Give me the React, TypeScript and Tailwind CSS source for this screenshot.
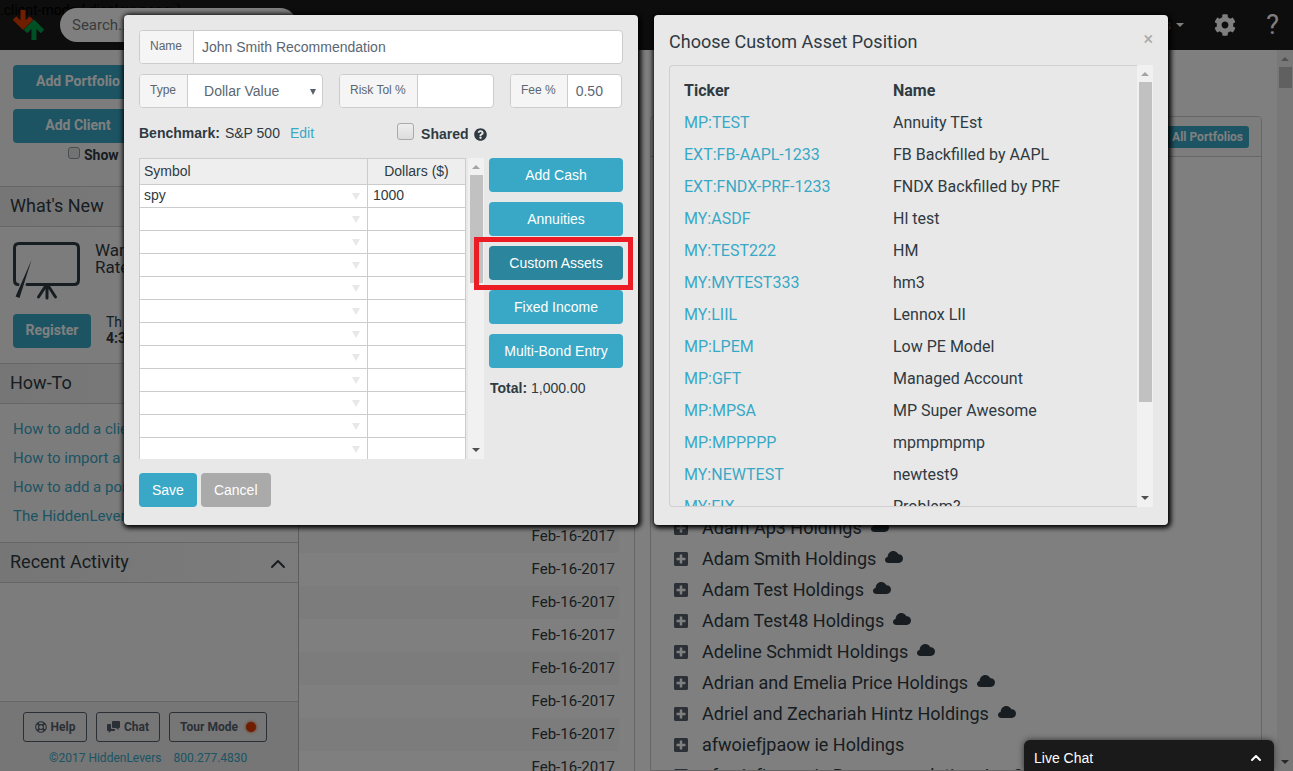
import { useState } from "react";
import { ChevronUp } from "lucide-react";
import { FaCog, FaPlusSquare, FaQuestionCircle, FaRegLifeRing } from "react-icons/fa";

const howToLinks = [
  "How to add a client",
  "How to import a",
  "How to add a portfolio",
  "The HiddenLevers",
];

const dates = Array.from({ length: 8 }, () => "Feb-16-2017");

const holdings = [
  { name: "Adam Ap3 Holdings", cloud: true },
  { name: "Adam Smith Holdings", cloud: true },
  { name: "Adam Test Holdings", cloud: true },
  { name: "Adam Test48 Holdings", cloud: true },
  { name: "Adeline Schmidt Holdings", cloud: true },
  { name: "Adrian and Emelia Price Holdings", cloud: true },
  { name: "Adriel and Zechariah Hintz Holdings", cloud: true },
  { name: "afwoiefjpaow ie Holdings", cloud: false },
  { name: "afwoiefjpaow ie Recommendation Jan 2", cloud: false },
];

const positions = [
  ["MP:TEST", "Annuity TEst"],
  ["EXT:FB-AAPL-1233", "FB Backfilled by AAPL"],
  ["EXT:FNDX-PRF-1233", "FNDX Backfilled by PRF"],
  ["MY:ASDF", "Hl test"],
  ["MY:TEST222", "HM"],
  ["MY:MYTEST333", "hm3"],
  ["MY:LIIL", "Lennox LII"],
  ["MP:LPEM", "Low PE Model"],
  ["MP:GFT", "Managed Account"],
  ["MP:MPSA", "MP Super Awesome"],
  ["MP:MPPPPP", "mpmpmpmp"],
  ["MY:NEWTEST", "newtest9"],
  ["MY:FIX", "Problem?"],
];

const assetRows = [
  ["spy", "1000"],
  ...Array.from({ length: 11 }, () => ["", ""]),
];

function Scrollbar({ thumb, upArrow = "border-b-[#a3a3a3]" }: { thumb: string; upArrow?: string }) {
  return (
    <div className="flex w-4 shrink-0 flex-col items-center bg-[#f1f1f1]" aria-hidden="true">
      <div className="flex h-[17px] items-center">
        <i className={`border-x-4 border-b-4 border-x-transparent ${upArrow}`} />
      </div>
      <div className={`w-[13px] bg-[#c1c1c1] ${thumb}`} />
      <div className="mt-auto flex h-[19px] items-center">
        <i className="border-x-4 border-t-4 border-x-transparent border-t-[#505050]" />
      </div>
    </div>
  );
}

function Logo() {
  return (
    <svg width="34" height="32" viewBox="0 0 34 32" className="relative" aria-label="HiddenLevers" role="img">
      <path d="M11 1v16M2.500 9l8.500 8.500L19.500 9" fill="none" stroke="#e03c00" strokeWidth="5" />
      <path d="M22 31V15M13.500 22.500L22 14l8.500 8.500" fill="none" stroke="#00a04a" strokeWidth="5" />
    </svg>
  );
}

function Whiteboard() {
  return (
    <svg width="68" height="58" viewBox="0 0 68 58" className="shrink-0" aria-hidden="true">
      <g fill="none" stroke="#2f3d45" strokeLinecap="round">
        <path d="M5 42.500Q1.500 42.500 1.500 38V6Q1.500 1.500 6 1.500H61Q65.500 1.500 65.500 6V38Q65.500 42.500 61 42.500H14" strokeWidth="3" />
        <path d="M32 45l-6.500 10M36 45l6.500 10M34 44v12" strokeWidth="3" />
      </g>
      <path d="M18.500 18L6.500 56l-4-1.500z" fill="#2f3d45" stroke="#f9f9f9" strokeWidth="1" paintOrder="stroke" />
    </svg>
  );
}

function CloudIcon() {
  return (
    <svg width="18" height="12" viewBox="0 0 18 12" fill="currentColor" className="mb-[3px] ml-[9px]" aria-hidden="true">
      <path d="M3.500 12C1.500 12 0 10.700 0 8.900 0 7.300 1.100 6.200 2.600 6 2.700 2.600 5.200 0 8.300 0c2.300 0 4.200 1.300 5.100 3.300 2.600-.2 4.600 1.700 4.600 4.300 0 2.500-1.900 4.400-4.300 4.400z" />
    </svg>
  );
}

function ChatIcon() {
  return (
    <svg width="13" height="12" viewBox="0 0 13 12" fill="currentColor" aria-hidden="true">
      <path d="M6 0h6q1 0 1 1v5q0 1-1 1h-.5v2L9 7H6Q5 7 5 6V1q0-1 1-1z" />
      <path d="M1 3h3v4q0 1 1 1h3v1q0 1-1 1H4l-2.200 2V10H1q-1 0-1-1V4q0-1 1-1z" />
    </svg>
  );
}

function Topbar() {
  return (
    <header className="relative flex h-[50px] shrink-0 items-center bg-[#1a1a1a] pl-3 text-white">
      <span className="absolute top-0 left-0 text-sm text-black">.client-mode {"{ display: none; }"}</span>
      <Logo />
      <input
        aria-label="Search"
        placeholder="Search..."
        className="relative ml-[14px] h-[34px] w-[237px] rounded-full bg-white px-3 text-[15px] placeholder:text-[#777]"
      />
      <nav className="ml-auto flex items-center pr-[14px]">
        <button className="flex items-center gap-[5px] text-[15px] text-[#ccc]">
          s <i className="border-x-4 border-t-4 border-x-transparent border-t-white" />
        </button>
        <button aria-label="Settings" className="ml-[30px]">
          <FaCog size={22} />
        </button>
        <button className="ml-[30px] text-[27px] leading-none">?</button>
      </nav>
    </header>
  );
}

function SectionTitle({ children, open }: { children: string; open?: boolean }) {
  return (
    <h2 className="flex h-[41px] shrink-0 items-center justify-between border-y border-[#ccc] bg-gradient-to-r from-[#ececec] to-[#f8f8f8] pr-2 pb-[2px] pl-[10px] text-[18px]">
      {children}
      {open && <ChevronUp size={24} strokeWidth={2} className="mt-1" />}
    </h2>
  );
}

const sideButton = "h-[34px] shrink-0 rounded-[4px] bg-[#38a8c6] pb-[2px] text-sm font-bold text-white";
const footerButton = "flex h-[30px] items-center justify-center rounded-[3px] border border-[#56616d]";

function Sidebar() {
  return (
    <aside className="flex w-[299px] shrink-0 flex-col border-r border-[#bbb] bg-[#f9f9f9]">
      <div className="flex h-[136px] shrink-0 flex-col gap-[10px] pt-[15px] pl-[13px]">
        <button className={`${sideButton} w-[130px]`}>Add Portfolio</button>
        <button className={`${sideButton} w-[130px]`}>Add Client</button>
        <label className="-mt-2 flex items-center gap-1 pl-[55px] text-sm font-bold">
          <input type="checkbox" className="mb-1 size-3 appearance-none rounded-[3px] border border-[#999] bg-gray-200" />
          Show
        </label>
      </div>
      <SectionTitle>What's New</SectionTitle>
      <div className="flex h-[136px] shrink-0 flex-col gap-[14px] pt-[15px] pl-[13px]">
        <div className="flex gap-[14px]">
          <Whiteboard />
          <p className="text-[17px] leading-[17px]">
            Want
            <br />
            Rate
          </p>
        </div>
        <div className="flex gap-[15px]">
          <button className={`${sideButton} w-[78px]`}>Register</button>
          <p className="text-sm leading-4">
            Th
            <br />
            <b>4:3</b>
          </p>
        </div>
      </div>
      <SectionTitle>How-To</SectionTitle>
      <ul className="h-[138px] shrink-0 pt-[11px] pl-[13px] text-[15px] leading-[29px]">
        {howToLinks.map((link) => (
          <li key={link}>
            <a href="#" className="text-[#38a8c6]">
              {link}
            </a>
          </li>
        ))}
      </ul>
      <SectionTitle open>Recent Activity</SectionTitle>
      <div className="flex-1" />
      <footer className="h-[70px] shrink-0 border-t border-[#ccc] bg-[#ececec] pt-[10px] text-xs text-[#56616d]">
        <div className="flex gap-[9px] pl-[23px] font-bold">
          <button className={`${footerButton} w-16 gap-1`}>
            <FaRegLifeRing size={12} /> Help
          </button>
          <button className={`${footerButton} w-16 gap-1`}>
            <ChatIcon /> Chat
          </button>
          <button className={`${footerButton} w-[98px] gap-2`}>
            Tour Mode <span className="size-[10px] rounded-full bg-[#e03c00] shadow-[0_0_3px_#e03c00]" />
          </button>
        </div>
        <div className="flex gap-3 pt-2 pl-[49px] text-[#38a8c6]">
          <a href="#">©2017 HiddenLevers</a>
          <a href="tel:8002774830">800.277.4830</a>
        </div>
      </footer>
    </aside>
  );
}

function ActivityPanel() {
  return (
    <section className="overflow-hidden border-r border-[#ccc] pt-[470px] pr-[15px]">
      <table className="w-full text-[15px]">
        <tbody>
          {dates.map((date, i) => (
            <tr key={i} className="h-[33px] odd:bg-[#f9f9f9]">
              <td className="pr-1 text-right">{date}</td>
            </tr>
          ))}
        </tbody>
      </table>
    </section>
  );
}

function HoldingsPanel() {
  return (
    <section className="mt-[66px] overflow-hidden rounded-t-[4px] border border-[#ccc]">
      <div className="flex h-[40px] items-center justify-end border-b border-[#ccc] bg-[#fafafa] pr-3">
        <button className="h-[22px] rounded-[3px] bg-[#38a8c6] px-[6px] text-xs font-bold text-white">All Portfolios</button>
      </div>
      <ul className="pt-[355px] pl-[22px] text-[18px]">
        {holdings.map((h) => (
          <li key={h.name} className="flex h-[31px] items-center">
            <FaPlusSquare size={16} className="text-[#56616d]" />
            <span className="ml-[13px]">{h.name}</span>
            {h.cloud && <CloudIcon />}
          </li>
        ))}
      </ul>
    </section>
  );
}

const addon = "flex h-full shrink-0 items-center border-r border-[#ccc] bg-[#f5f5f5] pr-[11px] pb-[2px] pl-[10px] text-xs";
const group = "flex h-[34px] overflow-hidden rounded-[4px] border border-[#ccc] bg-white text-[#5b6671]";
const actionButton = "h-[34px] w-full rounded-[4px] bg-[#38a8c6] text-sm text-white";

function RecommendationModal() {
  const [name, setName] = useState("John Smith Recommendation");
  const [fee, setFee] = useState("0.50");

  return (
    <section className="h-[510px] w-[514px] rounded-[4px] bg-[#e8e8e8] px-[15px] pt-[15px] font-['Liberation_Sans',sans-serif] text-sm shadow-[1px_1px_5px_2px_#000]">
      <div className={group}>
        <label htmlFor="name" className={addon}>Name</label>
        <input id="name" value={name} onChange={(e) => setName(e.target.value)} className="min-w-0 flex-1 px-2" />
      </div>
      <div className="mt-[10px] flex gap-4">
        <div className={`${group} w-[184px]`}>
          <label htmlFor="type" className={addon}>Type</label>
          <div className="relative flex-1">
            <select id="type" className="h-full w-full appearance-none pl-4">
              <option>Dollar Value</option>
            </select>
            <i className="pointer-events-none absolute top-[14px] right-[6px] border-x-[3px] border-t-6 border-x-transparent border-t-[#56616d]" />
          </div>
        </div>
        <div className={`${group} w-[155px]`}>
          <label htmlFor="risk" className={addon}>Risk Tol %</label>
          <input id="risk" className="min-w-0 flex-1 px-2" />
        </div>
        <div className={`${group} w-[112px]`}>
          <label htmlFor="fee" className={addon}>Fee %</label>
          <input id="fee" value={fee} onChange={(e) => setFee(e.target.value)} className="min-w-0 flex-1 px-2" />
        </div>
      </div>
      <div className="flex h-[50px] items-center">
        <b>Benchmark:</b>
        <span className="ml-[5px]">S&amp;P 500</span>
        <a href="#" className="ml-[10px] text-[#38a8c6]">Edit</a>
        <label className="ml-[83px] flex items-center gap-[7px] font-bold">
          <input type="checkbox" className="mb-[3px] size-[17px] appearance-none rounded-[3px] border border-[#aaa] bg-gradient-to-b from-[#eee] to-[#ddd]" />
          <span className="pt-[2px]">Shared</span>
        </label>
        <FaQuestionCircle size={13} className="mt-[2px] ml-[5px]" />
      </div>
      <div className="flex">
        <div className="h-[301px] w-[327px] overflow-hidden">
          <table className="w-full table-fixed border-collapse bg-white">
            <thead>
              <tr className="h-[26px] bg-[#eee]">
                <th className="border border-[#ccc] px-1 pb-[2px] text-left font-normal">Symbol</th>
                <th className="w-[98px] border border-[#ccc] pb-[2px] font-normal">Dollars ($)</th>
              </tr>
            </thead>
            <tbody>
              {assetRows.map(([symbol, dollars], i) => (
                <tr key={i} className="h-[23px]">
                  <td className="border border-[#ccc] p-0">
                    <div className="flex items-center pr-[7px]">
                      <input aria-label="Symbol" defaultValue={symbol} className="h-[22px] min-w-0 flex-1 px-1 pb-[2px]" />
                      <i className="border-x-4 border-t-7 border-x-transparent border-t-[#e8e8e8]" />
                    </div>
                  </td>
                  <td className="border border-[#ccc] p-0">
                    <input aria-label="Dollars" defaultValue={dollars} className="block h-[22px] w-full px-[5px] pb-[2px]" />
                  </td>
                </tr>
              ))}
            </tbody>
          </table>
        </div>
        <div className="ml-[2px] flex h-[301px]">
          <Scrollbar thumb="h-[108px]" />
        </div>
        <div className="ml-[5px] flex flex-1 flex-col gap-[10px]">
          <button className={actionButton}>Add Cash</button>
          <button className={actionButton}>Annuities</button>
          <div className="relative">
            <button className="block h-[34px] w-full rounded-[4px] bg-[#2b859c] text-sm text-white">Custom Assets</button>
            <div className="pointer-events-none absolute -top-[9px] -right-[10px] -bottom-[10px] -left-[15px] border-5 border-[#ed1c24]" />
          </div>
          <button className={actionButton}>Fixed Income</button>
          <button className={actionButton}>Multi-Bond Entry</button>
          <p className="pl-px">
            <b>Total:</b> 1,000.00
          </p>
        </div>
      </div>
      <div className="mt-[14px] flex gap-1">
        <button className="h-[34px] rounded-[4px] bg-[#38a8c6] px-[13px] text-white">Save</button>
        <button className="h-[34px] rounded-[4px] bg-[#aaa] px-[13px] text-white">Cancel</button>
      </div>
    </section>
  );
}

function AssetPositionModal() {
  return (
    <section className="flex h-[510px] w-[514px] flex-col rounded-[4px] bg-[#e8e8e8] px-[15px] pb-[18px] shadow-[1px_1px_5px_2px_#000]">
      <div className="flex h-[50px] shrink-0 items-center justify-between pt-[2px]">
        <h2 className="text-[18px]">Choose Custom Asset Position</h2>
        <button aria-label="Close" className="pb-[6px] text-[18px] text-[#aaa]">×</button>
      </div>
      <div className="flex min-h-0 flex-1">
        <div className="flex-1 overflow-hidden rounded-l-[4px] border border-r-0 border-[#d0d0d0] pt-[9px] pl-[14px]">
          <table className="w-full table-fixed text-base">
            <thead>
              <tr className="h-8 text-left">
                <th className="w-[209px]">Ticker</th>
                <th>Name</th>
              </tr>
            </thead>
            <tbody>
              {positions.map(([ticker, name]) => (
                <tr key={ticker} className="h-8">
                  <td>
                    <a href="#" className="text-[#38a8c6]">{ticker}</a>
                  </td>
                  <td>{name}</td>
                </tr>
              ))}
            </tbody>
          </table>
        </div>
        <Scrollbar thumb="h-80" />
      </div>
    </section>
  );
}

export default function App() {
  return (
    <div className="relative flex h-screen flex-col overflow-hidden bg-white font-[Roboto,sans-serif] text-[#2f3a42]">
      <Topbar />
      <div className="flex min-h-0 flex-1">
        <Sidebar />
        <main className="grid flex-1 grid-cols-[minmax(0,336fr)_minmax(0,612fr)] gap-[15px] pr-[15px]">
          <ActivityPanel />
          <HoldingsPanel />
        </main>
        <Scrollbar thumb="h-[21px]" />
      </div>

      <div className="absolute inset-0 flex items-start justify-center gap-4 bg-black/50 pt-[15px] pr-px">
        <RecommendationModal />
        <AssetPositionModal />
      </div>

      <button className="absolute right-[19px] bottom-0 flex h-[31px] w-[250px] items-center justify-between rounded-t-[6px] bg-[#1a1a1a] px-[10px] pt-1 font-['Liberation_Sans',sans-serif] text-sm text-white shadow-[0_0_6px_#333]">
        Live Chat
        <ChevronUp size={16} strokeWidth={3} />
      </button>
    </div>
  );
}
